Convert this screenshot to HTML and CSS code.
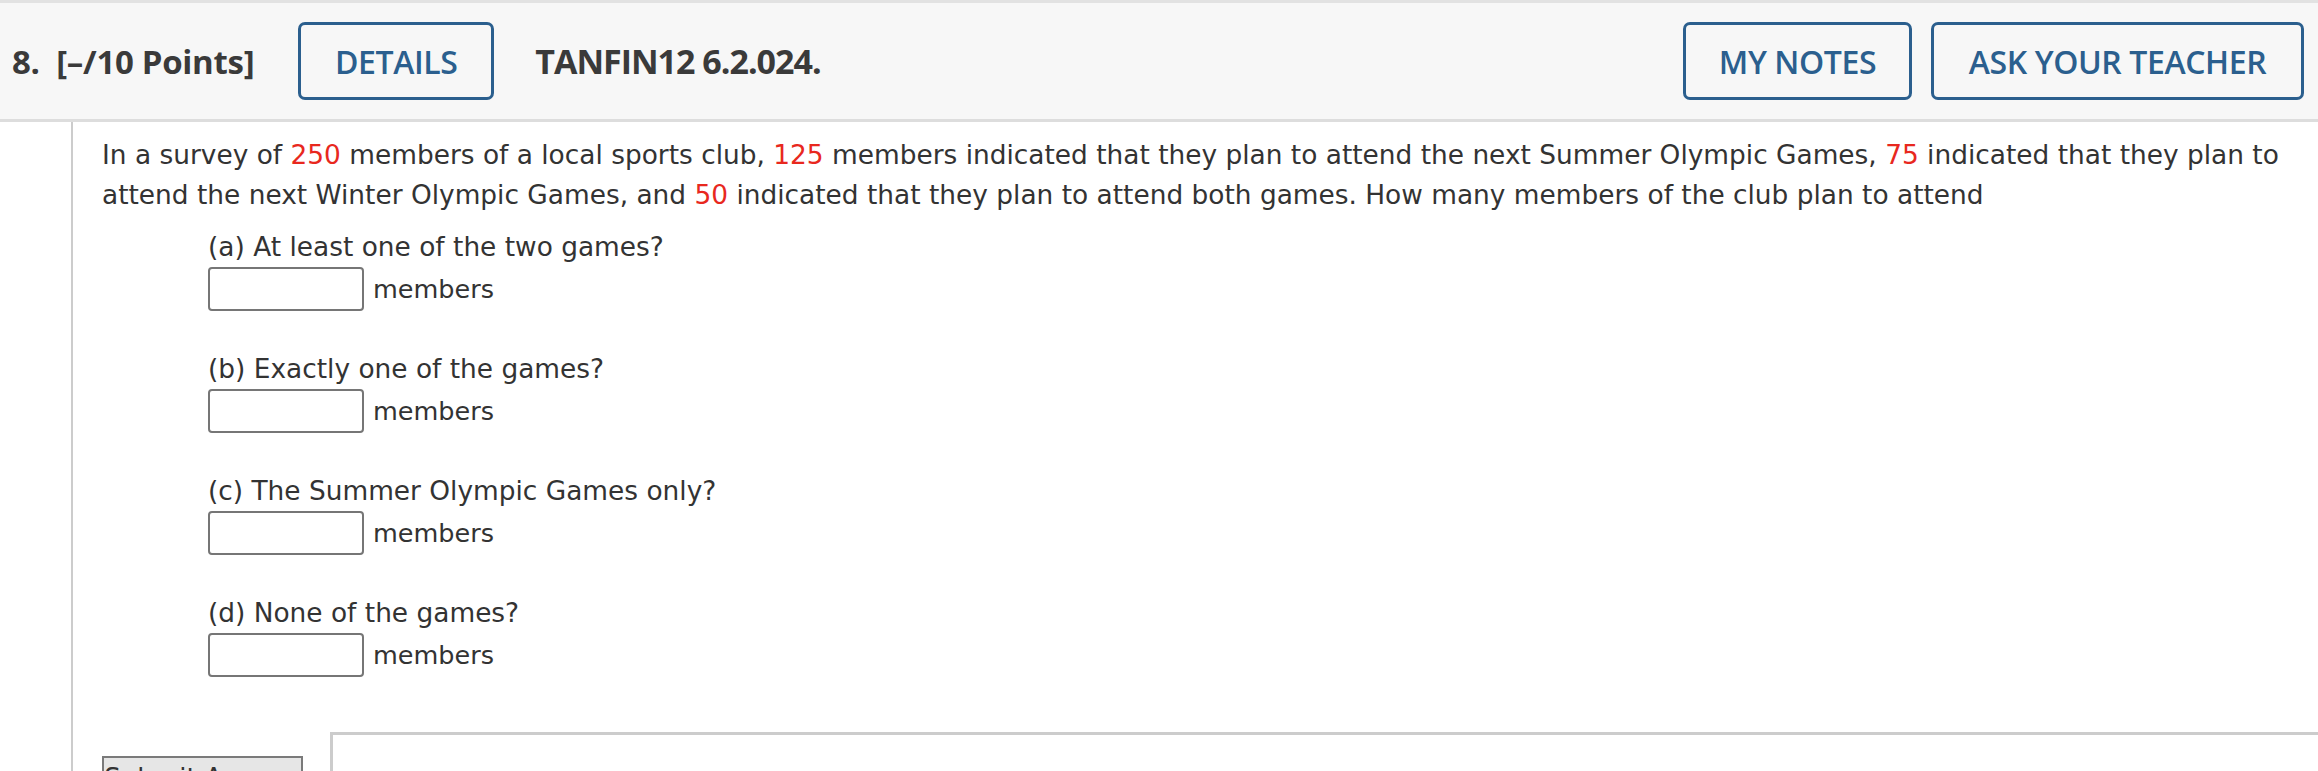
FILE: index.html
```html
<!DOCTYPE html>
<html>
<head>
<meta charset="utf-8">
<link rel="stylesheet" href="styles.css">
</head>
<body>
<div class="header">
  <div class="qnum">8.&nbsp; [–/10 Points]</div>
  <button class="hbtn details">DETAILS</button>
  <div class="qid">TANFIN12 6.2.024.</div>
  <div class="spacer"></div>
  <button class="hbtn notes">MY NOTES</button>
  <button class="hbtn ask">ASK YOUR TEACHER</button>
</div>
<div class="content">
  <p class="stem">In a survey of <span class="num">250</span> members of a local sports club, <span class="num">125</span> members indicated that they plan to attend the next Summer Olympic Games, <span class="num">75</span> indicated that they plan to attend the next Winter Olympic Games, and <span class="num">50</span> indicated that they plan to attend both games. How many members of the club plan to attend</p>
  <div class="parts">
    <div class="part">
      <div class="label">(a) At least one of the two games?</div>
      <div class="row"><input class="ans" type="text"><span class="unit">members</span></div>
    </div>
    <div class="part">
      <div class="label">(b) Exactly one of the games?</div>
      <div class="row"><input class="ans" type="text"><span class="unit">members</span></div>
    </div>
    <div class="part">
      <div class="label">(c) The Summer Olympic Games only?</div>
      <div class="row"><input class="ans" type="text"><span class="unit">members</span></div>
    </div>
    <div class="part">
      <div class="label">(d) None of the games?</div>
      <div class="row"><input class="ans" type="text"><span class="unit">members</span></div>
    </div>
  </div>
  <div class="footer">
    <button class="submit">Submit Answer</button>
    <div class="box"></div>
  </div>
</div>
</body>
</html>
```
FILE: styles.css
```css
html, body {
  margin: 0;
  padding: 0;
  background: #ffffff;
  overflow: hidden;
}
body {
  width: 2318px;
  height: 771px;
  font-family: "DejaVu Sans", Verdana, sans-serif;
}
.header {
  box-sizing: border-box;
  height: 122px;
  border-top: 3px solid #e2e2e2;
  border-bottom: 3px solid #dddddd;
  background: #f7f7f7;
  display: flex;
  align-items: center;
  padding-left: 12px;
  padding-right: 14px;
  font-family: "Open Sans", sans-serif;
}
.qnum {
  font-weight: 700;
  font-size: 33px;
  color: #3a3a3a;
  letter-spacing: -0.3px;
}
.hbtn {
  box-sizing: border-box;
  height: 78px;
  background: #f7f7f7;
  border: 3px solid #2b5f8e;
  border-radius: 7px;
  color: #2b5f8e;
  font-family: "Open Sans", sans-serif;
  font-weight: 600;
  font-size: 32px;
  letter-spacing: -0.4px;
  padding: 0;
}
.details {
  width: 196px;
  margin-left: 44px;
}
.qid {
  margin-left: 41px;
  font-weight: 700;
  font-size: 34px;
  color: #3a3a3a;
  letter-spacing: -1px;
}
.spacer {
  flex: 1;
}
.notes {
  width: 229px;
}
.ask {
  width: 373px;
  margin-left: 19px;
}
.content {
  margin-left: 71px;
  border-left: 2px solid #cccccc;
  padding-left: 29px;
  padding-top: 13px;
  padding-right: 30px;
  height: 700px;
  color: #333333;
  font-size: 26.4px;
}
.stem {
  margin: 0;
  line-height: 40px;
}
.num {
  color: #e8281e;
}
.parts {
  margin-left: 106px;
  margin-top: 12px;
  display: flex;
  flex-direction: column;
  gap: 38px;
}
.label {
  line-height: 40px;
}
.row {
  display: flex;
  align-items: center;
  gap: 9px;
}
.ans {
  box-sizing: border-box;
  width: 156px;
  height: 44px;
  border: 2px solid #767676;
  border-radius: 4px;
  background: #ffffff;
  margin: 0;
}
.unit {
  line-height: 40px;
  font-size: 25.5px;
}
.footer {
  display: flex;
  align-items: flex-start;
  margin-top: 55px;
  margin-right: -40px;
}
.submit {
  box-sizing: border-box;
  margin-top: 24px;
  width: 201px;
  height: 44px;
  background: #e6e6e6;
  border: 2px solid #7a7a7a;
  font-family: "DejaVu Sans", Verdana, sans-serif;
  font-size: 26px;
  color: #333333;
  padding: 0;
  white-space: nowrap;
}
.box {
  margin-left: 27px;
  flex: 1;
  height: 200px;
  border-top: 3px solid #cccccc;
  border-left: 3px solid #cccccc;
}
```
